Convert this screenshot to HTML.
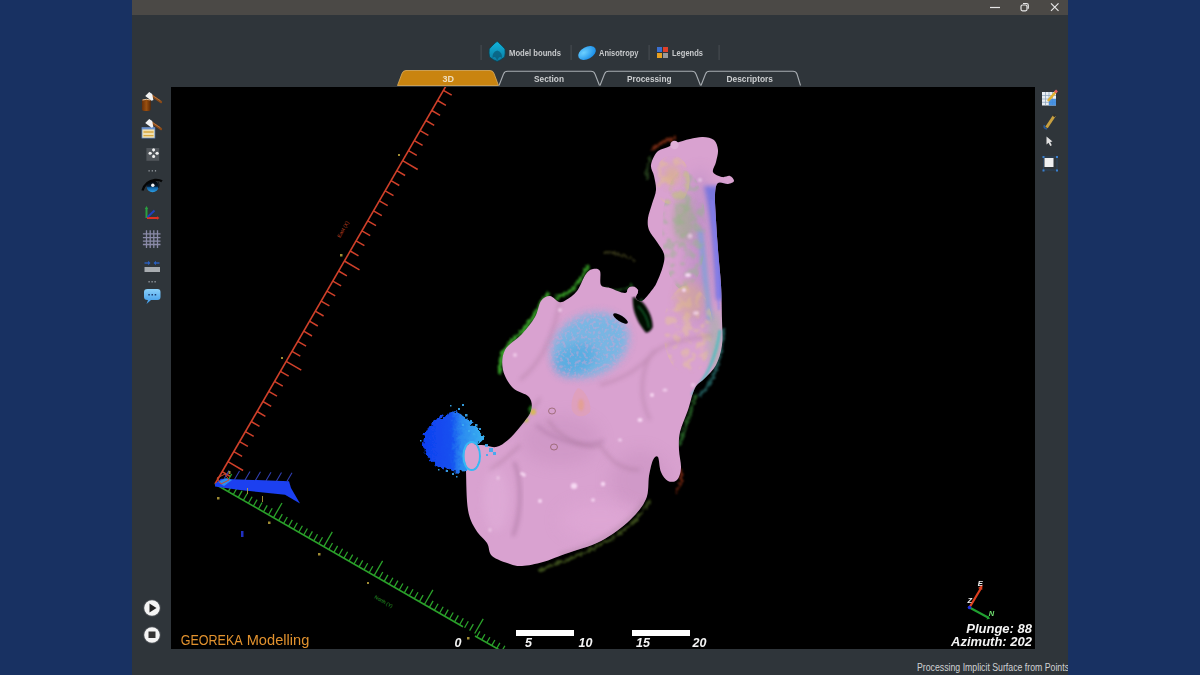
<!DOCTYPE html>
<html><head><meta charset="utf-8">
<style>
html,body{margin:0;padding:0;width:1200px;height:675px;overflow:hidden;background:#183162;font-family:"Liberation Sans",sans-serif;}
svg{position:absolute;left:0;top:0;}
text{font-family:"Liberation Sans",sans-serif;}
</style></head>
<body>
<svg width="1200" height="675" viewBox="0 0 1200 675">
<defs>
  <clipPath id="vc"><rect x="171" y="87" width="864" height="562"/></clipPath>
  <filter id="sb" x="-20%" y="-50%" width="140%" height="200%"><feGaussianBlur stdDeviation="0.7"/></filter>
  <clipPath id="wc"><rect x="132" y="0" width="936" height="675"/></clipPath>
  <radialGradient id="ellb" cx="0.35" cy="0.35" r="0.7"><stop offset="0" stop-color="#6cd0ff"/><stop offset="1" stop-color="#1a8ee8"/></radialGradient>
  <linearGradient id="hexg" x1="0" y1="0" x2="0" y2="1"><stop offset="0" stop-color="#12b4dc"/><stop offset="1" stop-color="#0a7aa0"/></linearGradient>
</defs>
<!-- window -->
<rect x="132" y="0" width="936" height="675" fill="#2f353a"/>
<rect x="132" y="0" width="936" height="15" fill="#4b4946"/>
<g stroke="#e6e6e6" stroke-width="1.2" fill="none">
  <line x1="990" y1="7.5" x2="1000" y2="7.5"/>
  <rect x="1021" y="5" width="6" height="5.8" rx="1.5"/>
  <path d="M1023 3.5 h3.5 a1.8 1.8 0 0 1 1.8 1.8 v3.5"/>
  <path d="M1051 3.3 l7.5 7.5 M1058.5 3.3 l-7.5 7.5"/>
</g>
<!-- top toolbar -->
<g fill="#454a4f">
  <rect x="480.5" y="45" width="1.2" height="15"/>
  <rect x="570.5" y="45" width="1.2" height="15"/>
  <rect x="648.5" y="45" width="1.2" height="15"/>
  <rect x="718.5" y="45" width="1.2" height="15"/>
</g>
<!-- model bounds icon -->
<path d="M497.2 41.5 Q499 42.5 505 49 Q505.5 53 504.7 57 Q500 60.5 497.2 61.5 Q494 60.5 489.5 57 Q488.7 53 489.2 49 Q495 42.5 497.2 41.5Z" fill="url(#hexg)" stroke="#0a4050" stroke-width="0.8"/>
<path d="M492.5 58 Q492 52 497.2 50.5 Q502.5 52 502 58 Q499 55 497.2 61 Q495.5 55 492.5 58Z" fill="#0a5a78" opacity="0.75"/>
<!-- anisotropy icon -->
<ellipse cx="587" cy="53" rx="9.5" ry="6" transform="rotate(-28 587 53)" fill="url(#ellb)"/>
<!-- legends icon -->
<rect x="657" y="47" width="5" height="5" fill="#3a6fd0"/>
<rect x="663" y="47" width="5" height="5" fill="#e0402a"/>
<rect x="657" y="53" width="5" height="5" fill="#e8a020"/>
<rect x="663" y="53" width="5" height="5" fill="#9a9a9a"/>
<g fill="#d4d6d8" font-size="9.2" style="font-weight:bold" opacity="0.92">
  <text x="509" y="56.3" textLength="52" lengthAdjust="spacingAndGlyphs">Model bounds</text>
  <text x="599" y="56.3" textLength="39.5" lengthAdjust="spacingAndGlyphs">Anisotropy</text>
  <text x="672" y="56.3" textLength="31" lengthAdjust="spacingAndGlyphs">Legends</text>
</g>
<!-- tabs -->
<path d="M397.5 85.5 L402 73.5 Q403 70.5 406 70.5 L490 70.5 Q493 70.5 494 73.5 L498.5 85.5 Z" fill="#c98410" stroke="#e0b060" stroke-width="0.8"/>
<g fill="none" stroke="#a8adb2" stroke-width="1.1">
  <path d="M499 85.5 L503.5 74 Q504.5 71.2 507.5 71.2 L591 71.2 Q594 71.2 595 74 L599.5 85.5"/>
  <path d="M600 85.5 L604.5 74 Q605.5 71.2 608.5 71.2 L692 71.2 Q695 71.2 696 74 L700.5 85.5"/>
  <path d="M701 85.5 L705.5 74 Q706.5 71.2 709.5 71.2 L793 71.2 Q796 71.2 797 74 L800.5 85.5"/>
</g>
<g font-size="9.4" fill="#d8dadc" style="font-weight:bold" opacity="0.93">
  <text x="442.5" y="82" fill="#f3e6cc" textLength="11.5" lengthAdjust="spacingAndGlyphs">3D</text>
  <text x="534" y="82" textLength="30" lengthAdjust="spacingAndGlyphs">Section</text>
  <text x="627" y="82" textLength="44.5" lengthAdjust="spacingAndGlyphs">Processing</text>
  <text x="726.5" y="82" textLength="46.5" lengthAdjust="spacingAndGlyphs">Descriptors</text>
</g>

<!-- left toolbar -->
<g>
  <!-- icon1 log + axe -->
  <defs><linearGradient id="logg" x1="0" y1="0" x2="1" y2="0"><stop offset="0" stop-color="#6a3008"/><stop offset="0.5" stop-color="#9a5010"/><stop offset="1" stop-color="#5a2806"/></linearGradient></defs>
  <path d="M142 100 Q142 99 146.4 99 Q150.8 99 150.8 100 L150.8 109.5 Q150.8 111 146.4 111 Q142 111 142 109.5Z" fill="url(#logg)"/>
  <path d="M142.5 100 Q146.4 98.6 150.3 100" stroke="#e8d0b0" stroke-width="0.9" fill="none"/>
  <path d="M152 95.8 L161 102" stroke="#8a4a18" stroke-width="2.3" stroke-linecap="round"/>
  <path d="M152.5 95.5 L160 100.5" stroke="#c07a40" stroke-width="0.8" stroke-linecap="round"/>
  <path d="M145.2 96 L149.2 92 L152.2 94 L153.4 100 L151.6 100.8 L147.6 97.8Z" fill="#f2f2f2"/>
  <!-- icon2 window + axe -->
  <rect x="141.6" y="127.2" width="13.6" height="11.2" fill="#6a92d0"/>
  <rect x="142.4" y="129.4" width="12" height="8.3" fill="#f0e0b0"/>
  <path d="M143.5 132 H153.5 M143.5 135.6 H153.5" stroke="#d8a840" stroke-width="1.4"/>
  <path d="M152 122.8 L161 129" stroke="#8a4a18" stroke-width="2.3" stroke-linecap="round"/>
  <path d="M152.5 122.5 L160 127.5" stroke="#c07a40" stroke-width="0.8" stroke-linecap="round"/>
  <path d="M145.2 123 L149.2 119 L152.2 121 L153.4 127 L151.6 127.8 L147.6 124.8Z" fill="#f2f2f2"/>
  <!-- icon3 move -->
  <rect x="146.4" y="148" width="12.8" height="12.8" fill="#50555a"/>
  <g fill="#f0f0f0">
    <circle cx="153.6" cy="149.8" r="1.5"/><circle cx="153.6" cy="156.6" r="1.5"/>
    <circle cx="150" cy="153.2" r="1.5"/><circle cx="157.2" cy="153.2" r="1.5"/>
    <path d="M152.4 150.6 h2.4 l-1.2 1.2z M152.4 155.8 h2.4 l-1.2 -1.2z M150.8 152 v2.4 l1.2 -1.2z M156.4 152 v2.4 l-1.2 -1.2z"/>
  </g>
  <!-- dots -->
  <g fill="#8a9096"><rect x="148.5" y="170" width="1.2" height="1.6"/><rect x="151.7" y="170" width="1.2" height="1.6"/><rect x="154.9" y="170" width="1.2" height="1.6"/></g>
  <!-- eye -->
  <defs><linearGradient id="irisg" x1="0" y1="0" x2="0" y2="1"><stop offset="0" stop-color="#000"/><stop offset="0.5" stop-color="#08182a"/><stop offset="0.62" stop-color="#1060a0"/><stop offset="1" stop-color="#2a9ee6"/></linearGradient></defs>
  <circle cx="152.6" cy="186.2" r="6" fill="url(#irisg)"/>
  <path d="M142.5 190.5 Q145.5 181 155 179.9 Q159.5 179.6 162 181.3" stroke="#050505" stroke-width="2.3" fill="none"/>
  <path d="M158 181.5 Q160 185 158.5 188" stroke="#050505" stroke-width="1" fill="none" opacity="0.6"/>
  <circle cx="152.8" cy="185.2" r="1.7" fill="#f4f4f4"/>
  <!-- axes -->
  <path d="M146.5 218 V208" stroke="#2aa040" stroke-width="2"/>
  <path d="M144.8 209 l1.7 -3 l1.7 3z" fill="#2aa040"/>
  <path d="M147 218 H157.5" stroke="#e03020" stroke-width="2"/>
  <path d="M157 216.3 l2.5 1.7 l-2.5 1.7z" fill="#e03020"/>
  <path d="M147.5 217 L154.5 210.5" stroke="#2040c0" stroke-width="2"/>
  <!-- grid -->
  <g stroke="#8a8aa8" stroke-width="1.3">
    <path d="M146.5 230.3 V247.9 M150.2 230.3 V247.9 M153.8 230.3 V247.9 M157.5 230.3 V247.9"/>
    <path d="M142.9 233.9 H160.5 M142.9 237.6 H160.5 M142.9 241.2 H160.5 M142.9 244.5 H160.5"/>
  </g>
  <!-- arrows + bar -->
  <g fill="#2a60c0">
    <rect x="144.5" y="262.3" width="5" height="1.4"/><rect x="154.5" y="262.3" width="5" height="1.4"/>
    <path d="M148 260.8 l2.5 2.2 l-2.5 2.2z"/><path d="M156 260.8 l-2.5 2.2 l2.5 2.2z"/>
  </g>
  <rect x="144.5" y="267" width="15.5" height="5" fill="#a8acb0"/>
  <g fill="#9aa0a6"><rect x="148.5" y="281" width="1.2" height="1.5"/><rect x="151.5" y="281" width="1.2" height="1.5"/><rect x="154.5" y="281" width="1.2" height="1.5"/></g>
  <!-- speech bubble -->
  <defs><linearGradient id="bubg" x1="0" y1="0" x2="0" y2="1"><stop offset="0" stop-color="#8ad0fa"/><stop offset="1" stop-color="#3a98e8"/></linearGradient></defs>
  <path d="M147.5 289 H157.5 Q160.5 289 160.5 292 V297 Q160.5 300 157.5 300 H151 L146.5 304 L148 300 H147.5 Q144 300 144 297 V292 Q144 289 147.5 289Z" fill="url(#bubg)"/>
  <g fill="#1a3a70"><rect x="148.3" y="294" width="1.5" height="1.5"/><rect x="151.5" y="294" width="1.5" height="1.5"/><rect x="154.7" y="294" width="1.5" height="1.5"/></g>
  <!-- play / stop -->
  <circle cx="152" cy="608" r="8.8" fill="#5a5e62" opacity="0.6"/>
  <circle cx="152" cy="608" r="7.8" fill="#f4f4f4"/>
  <path d="M149.5 603.5 L156.5 608 L149.5 612.5Z" fill="#222"/>
  <circle cx="152" cy="635" r="8.8" fill="#5a5e62" opacity="0.6"/>
  <circle cx="152" cy="635" r="7.8" fill="#f4f4f4"/>
  <rect x="148.5" y="631.5" width="7" height="6.5" fill="#333"/>
</g>
<!-- right toolbar -->
<g>
  <rect x="1042" y="92" width="14" height="13.5" fill="#e8eef4"/>
  <g stroke="#8aa0b8" stroke-width="0.7"><path d="M1042 95.5 H1056 M1042 99 H1056 M1042 102.3 H1056 M1045.5 92 V105.5 M1049 92 V105.5 M1052.5 92 V105.5"/></g>
  <rect x="1049" y="99" width="7" height="6.5" fill="#3a8ae0" opacity="0.9"/>
  <path d="M1048 101 L1056 91.5" stroke="#e0b030" stroke-width="2.6"/>
  <path d="M1055 92.5 L1057 90.5" stroke="#e06060" stroke-width="2.6"/>
  <path d="M1044.5 125 Q1043 128 1047 129" stroke="#2a5a9a" stroke-width="1.6" fill="none"/>
  <path d="M1046.5 127.5 L1054.5 115.5" stroke="#c8a040" stroke-width="3"/>
  <path d="M1053.5 116.5 L1055 114.2" stroke="#303030" stroke-width="3"/>
  <path d="M1046.5 136.5 L1046.5 144.5 L1048.5 142.8 L1050.3 146 L1051.8 145.2 L1050.2 142 L1052.5 141.6 Z" fill="#e0e0e0"/>
  <rect x="1043.5" y="157" width="13.5" height="13" fill="none" stroke="#2a5a90" stroke-width="0.6" opacity="0.7"/>
  <rect x="1044.5" y="158" width="9" height="9" fill="#f0f0f0"/>
  <g fill="#3a80d0"><rect x="1042.5" y="156" width="2" height="2"/><rect x="1056" y="156" width="2" height="2"/><rect x="1042.5" y="169.5" width="2" height="2"/><rect x="1056" y="169.5" width="2" height="2"/></g>
</g>
<!-- viewport -->
<rect x="171" y="87" width="864" height="562" fill="#000"/>
<g clip-path="url(#vc)">
<path d="M215 484 L445.9 86.1" stroke="#d0402a" stroke-width="1.6"/><path d="M216.3 481.8l8.3 4.8M222.1 471.7l8.3 4.8M228 461.7l15.1 8.8M233.8 451.6l8.3 4.8M239.6 441.6l8.3 4.8M245.4 431.6l8.3 4.8M251.2 421.5l8.3 4.8M257.1 411.5l8.3 4.8M262.9 401.5l8.3 4.8M268.7 391.4l8.3 4.8M274.5 381.4l8.3 4.8M280.4 371.4l8.3 4.8M286.2 361.3l15.1 8.8M292 351.3l8.3 4.8M297.8 341.3l8.3 4.8M303.7 331.2l8.3 4.8M309.5 321.2l8.3 4.8M315.3 311.2l8.3 4.8M321.1 301.1l8.3 4.8M326.9 291.1l8.3 4.8M332.8 281.1l8.3 4.8M338.6 271l8.3 4.8M344.4 261l15.1 8.8M350.2 251l8.3 4.8M356.1 240.9l8.3 4.8M361.9 230.9l8.3 4.8M367.7 220.9l8.3 4.8M373.5 210.8l8.3 4.8M379.4 200.8l8.3 4.8M385.2 190.8l8.3 4.8M391 180.7l8.3 4.8M396.8 170.7l8.3 4.8M402.6 160.7l15.1 8.8M408.5 150.6l8.3 4.8M414.3 140.6l8.3 4.8M420.1 130.6l8.3 4.8M425.9 120.5l8.3 4.8M431.8 110.5l8.3 4.8M437.6 100.5l8.3 4.8M443.4 90.4l8.3 4.8" stroke="#d0402a" stroke-width="1.5"/><path d="M215 484 L463 626.7" stroke="#2aa02a" stroke-width="1.6"/><path d="M475 636 L512 657" stroke="#2aa02a" stroke-width="1.6"/><path d="M218.2 485.8l3.7 -6.5M223.2 488.7l8.5 -14.7M228.3 491.6l3.7 -6.5M233.3 494.5l3.7 -6.5M238.3 497.4l3.7 -6.5M243.4 500.3l3.7 -6.5M248.4 503.2l3.7 -6.5M253.4 506.1l3.7 -6.5M258.4 509l3.7 -6.5M263.5 511.9l3.7 -6.5M268.5 514.8l3.7 -6.5M273.5 517.7l8.5 -14.7M278.6 520.6l3.7 -6.5M283.6 523.5l3.7 -6.5M288.6 526.4l3.7 -6.5M293.6 529.3l3.7 -6.5M298.7 532.2l3.7 -6.5M303.7 535l3.7 -6.5M308.7 537.9l3.7 -6.5M313.8 540.8l3.7 -6.5M318.8 543.7l3.7 -6.5M323.8 546.6l8.5 -14.7M328.8 549.5l3.7 -6.5M333.9 552.4l3.7 -6.5M338.9 555.3l3.7 -6.5M343.9 558.2l3.7 -6.5M349 561.1l3.7 -6.5M354 564l3.7 -6.5M359 566.9l3.7 -6.5M364 569.8l3.7 -6.5M369.1 572.7l3.7 -6.5M374.1 575.6l8.5 -14.7M379.1 578.5l3.7 -6.5M384.2 581.4l3.7 -6.5M389.2 584.2l3.7 -6.5M394.2 587.1l3.7 -6.5M399.2 590l3.7 -6.5M404.3 592.9l3.7 -6.5M409.3 595.8l3.7 -6.5M414.3 598.7l3.7 -6.5M419.4 601.6l3.7 -6.5M424.4 604.5l8.5 -14.7M429.4 607.4l3.7 -6.5M434.4 610.3l3.7 -6.5M439.5 613.2l3.7 -6.5M444.5 616.1l3.7 -6.5M449.5 619l3.7 -6.5M454.6 621.9l3.7 -6.5M459.6 624.8l3.7 -6.5M464.6 627.7l3.7 -6.5M469.6 630.6l3.7 -6.5M474.7 633.5l8.5 -14.7M476.7 637l3.2 -5.6M481.7 639.9l3.2 -5.6M486.7 642.8l3.2 -5.6M491.7 645.6l3.2 -5.6M496.7 648.5l3.2 -5.6M501.7 651.4l3.2 -5.6" stroke="#2aa02a" stroke-width="1.3"/>
<!-- blue wedge -->
<path d="M215 484 L221 478.7 L289 481.3 L291 488 L300 503.6 L285 494.7 L240 490 L215 486.5Z" fill="#1a40f0" filter="url(#sb)"/>
<path d="M218 482 L226 478 L232 480 L224 486Z" fill="#30a0f0" opacity="0.8"/>
<g stroke="#3a4ad0" stroke-width="1.1" opacity="0.85">
<path d="M224 479 l5 -8.5 M234.5 479.5 l5 -8.5 M245 480 l5 -8.5 M255.5 480.3 l5 -8.5 M266 480.7 l5 -8.5 M276.5 481 l5 -8.5 M287 481.3 l5 -8.5"/>
</g>
<path d="M217 478 L225 474 L229 480 L221 484Z" fill="none" stroke="#d04a2a" stroke-width="1"/>
<g fill="#c8b040" opacity="0.8">
<rect x="228.5" y="471" width="2" height="3"/><rect x="217" y="497" width="2.5" height="2.5"/><rect x="268" y="521.5" width="2.5" height="2.5"/>
<rect x="318" y="553" width="2.5" height="2.5"/><rect x="367" y="582" width="2" height="2"/><rect x="262" y="496" width="1" height="6"/><rect x="247" y="488" width="1" height="6"/>
<rect x="340" y="254" width="2.5" height="2.5"/><rect x="398" y="154" width="2" height="2"/><rect x="281" y="357" width="2" height="2"/><rect x="467" y="637" width="2.5" height="2.5"/>
</g>
<rect x="241" y="531" width="2.5" height="6" fill="#2030c0"/>
<text x="0" y="0" font-size="5" fill="#2aa02a" transform="translate(374 598) rotate(30)">North (Y)</text>
<text x="0" y="0" font-size="5" fill="#c04020" transform="translate(340 238) rotate(-60)">East (X)</text>

<defs>
  <clipPath id="bc"><path d="M651 165 C651.5 161 654.2 155 657 152 C659.8 149 664.8 148.5 668 147 C671.2 145.5 672.3 144.3 676 143 C679.7 141.7 685.5 140 690 139 C694.5 138 699 136.8 703 137 C707 137.2 711.5 137.8 714 140 C716.5 142.2 717.7 146.3 718 150 C718.3 153.7 716.8 158.3 716 162 C715.2 165.7 712 169.5 713 172 C714 174.5 719.2 176.3 722 177 C724.8 177.7 728 175.3 730 176 C732 176.7 734.3 179.7 734 181 C733.7 182.3 730.7 183.7 728 184 C725.3 184.3 720.2 181.2 718 183 C715.8 184.8 715.3 188.8 715 195 C714.7 201.2 715.5 210.8 716 220 C716.5 229.2 717.2 239.2 718 250 C718.8 260.8 720.3 273.3 721 285 C721.7 296.7 721.8 310 722 320 C722.2 330 723 337.5 722 345 C721 352.5 718.8 359.5 716 365 C713.2 370.5 708.5 374.2 705 378 C701.5 381.8 697.8 382.7 695 388 C692.2 393.3 690.5 402.7 688 410 C685.5 417.3 681.5 425.3 680 432 C678.5 438.7 678.8 444 679 450 C679.2 456 681.3 463 681 468 C680.7 473 679.2 477.8 677 480 C674.8 482.2 670.7 482.3 668 481 C665.3 479.7 662.7 476 661 472 C659.3 468 659.3 459 658 457 C656.7 455 654.5 456.8 653 460 C651.5 463.2 650.2 469.5 649 476 C647.8 482.5 649.2 491.7 646 499 C642.8 506.3 637.5 513 630 520 C622.5 527 611.8 535.3 601 541 C590.2 546.7 574.7 550.5 565 554 C555.3 557.5 550.2 560 543 562 C535.8 564 527.5 565.7 522 566 C516.5 566.3 515 565.7 510 564 C505 562.3 495.8 559.5 492 556 C488.2 552.5 489.7 547.3 487 543 C484.3 538.7 479.2 535.5 476 530 C472.8 524.5 469.7 520 468 510 C466.3 500 466.3 480.3 466 470 C465.7 459.7 463.5 452.2 466 448 C468.5 443.8 476 445.2 481 445 C486 444.8 491.5 447.8 496 447 C500.5 446.2 504 443.3 508 440 C512 436.7 516.2 431.8 520 427 C523.8 422.2 529.5 416 531 411 C532.5 406 532 400.8 529 397 C526 393.2 517.3 392.5 513 388 C508.7 383.5 504.3 376.3 503 370 C501.7 363.7 501.8 356 505 350 C508.2 344 517 339.5 522 334 C527 328.5 531.8 322.5 535 317 C538.2 311.5 538.5 304.5 541 301 C543.5 297.5 547 295.8 550 296 C553 296.2 556.3 301.3 559 302 C561.7 302.7 563 301.8 566 300 C569 298.2 573.7 295.3 577 291 C580.3 286.7 583.3 277.7 586 274 C588.7 270.3 590.7 269.5 593 269 C595.3 268.5 598.7 268.3 600 271 C601.3 273.7 599.3 282.2 601 285 C602.7 287.8 606 286.7 610 288 C614 289.3 621.7 293.2 625 293 C628.3 292.8 627.8 287.5 630 287 C632.2 286.5 637 288.2 638 290 C639 291.8 635.3 296.2 636 298 C636.7 299.8 639.3 302.3 642 301 C644.7 299.7 649.5 293.2 652 290 C654.5 286.8 655.2 286 657 282 C658.8 278 661.8 270.7 663 266 C664.2 261.3 665 258 664 254 C663 250 659.5 246 657 242 C654.5 238 650.5 234 649 230 C647.5 226 647.5 222.3 648 218 C648.5 213.7 650.7 208.7 652 204 C653.3 199.3 655.7 194.7 656 190 C656.3 185.3 654.8 180.2 654 176 C653.2 171.8 650.5 169 651 165Z"/></clipPath>
  <filter id="bl1" x="-50%" y="-50%" width="200%" height="200%"><feGaussianBlur stdDeviation="1"/></filter>
  <filter id="bl2" x="-50%" y="-50%" width="200%" height="200%"><feGaussianBlur stdDeviation="2"/></filter>
  <filter id="bl4" x="-50%" y="-50%" width="200%" height="200%"><feGaussianBlur stdDeviation="4"/></filter>
  <filter id="bl8" x="-50%" y="-50%" width="200%" height="200%"><feGaussianBlur stdDeviation="8"/></filter>
  <filter id="mottle2" x="0" y="0" width="100%" height="100%">
    <feTurbulence type="fractalNoise" baseFrequency="0.35" numOctaves="2" seed="7" result="n"/>
    <feColorMatrix in="n" type="matrix" values="0 0 0 0 0  0 0 0 0 0  0 0 0 0 0  0 0 0 12 -6.5" result="a"/>
    <feComposite in="SourceGraphic" in2="a" operator="in" result="c"/>
    <feComposite in="c" in2="SourceAlpha" operator="in"/>
  </filter>
  <filter id="rag" x="-20%" y="-20%" width="140%" height="140%">
    <feTurbulence type="fractalNoise" baseFrequency="0.25" numOctaves="2" seed="5" result="n"/>
    <feDisplacementMap in="SourceGraphic" in2="n" scale="7" xChannelSelector="R" yChannelSelector="G"/>
    <feGaussianBlur stdDeviation="0.5"/>
  </filter>
  <filter id="ragb" x="-20%" y="-20%" width="140%" height="140%">
    <feTurbulence type="fractalNoise" baseFrequency="0.3" numOctaves="2" seed="9" result="n"/>
    <feDisplacementMap in="SourceGraphic" in2="n" scale="6" xChannelSelector="R" yChannelSelector="G"/>
    <feGaussianBlur stdDeviation="1.1"/>
  </filter>
  <filter id="mottle3" x="0" y="0" width="100%" height="100%">
    <feTurbulence type="fractalNoise" baseFrequency="0.12" numOctaves="2" seed="11" result="n"/>
    <feColorMatrix in="n" type="matrix" values="0 0 0 0 0  0 0 0 0 0  0 0 0 0 0  0 0 0 8 -4" result="a"/>
    <feGaussianBlur in="a" stdDeviation="0.8" result="ab"/>
    <feComposite in="SourceGraphic" in2="ab" operator="in" result="c"/>
    <feComposite in="c" in2="SourceAlpha" operator="in"/>
  </filter>
  <filter id="mottle" x="0" y="0" width="100%" height="100%">
    <feTurbulence type="fractalNoise" baseFrequency="0.18" numOctaves="2" seed="3" result="n"/>
    <feColorMatrix in="n" type="matrix" values="0 0 0 0 0  0 0 0 0 0  0 0 0 0 0  0 0 0 9 -4" result="a"/>
    <feComposite in="SourceGraphic" in2="a" operator="in"/>
  </filter>
</defs>
<!-- halo scatter -->
<g fill="none" stroke-linecap="round" filter="url(#ragb)" opacity="0.9">
  <path d="M500 372 C498 355 510 340 522 332 C532 322 538 305 548 294" stroke="#3aaa2a" stroke-width="4" opacity="1"/>
  <path d="M556 298 C570 294 578 286 588 266" stroke="#3aaa2a" stroke-width="3.5" opacity="0.9"/>
  <path d="M604 252 C612 252 625 255 634 260" stroke="#6a6a30" stroke-width="2" opacity="0.6"/>
  <path d="M598 286 C605 292 620 292 632 286" stroke="#2a7a2a" stroke-width="2.5" opacity="0.7"/>
  <path d="M641 300 C650 315 655 325 656 340" stroke="#1a6a30" stroke-width="3" opacity="0.8"/>
  <path d="M652 150 C655 145 665 140 675 138" stroke="#b04020" stroke-width="3" opacity="0.7"/>
  <path d="M650 158 C647 165 646 172 647 180" stroke="#406a30" stroke-width="2.5" opacity="0.6"/>
  <path d="M723 330 C722 360 712 385 700 395" stroke="#3aa0a0" stroke-width="3" opacity="0.6"/>
  <path d="M696 395 C690 415 684 430 680 445" stroke="#40a040" stroke-width="3" opacity="0.6"/>
  <path d="M681 470 C683 480 680 488 676 492" stroke="#c04020" stroke-width="2.5" opacity="0.7"/>
  <path d="M650 500 C640 520 620 535 600 545 C580 556 560 562 540 570" stroke="#6a8a30" stroke-width="2.5" opacity="0.6"/>
  <path d="M480 440 C470 442 466 445 464 450" stroke="#2a8a22" stroke-width="2.5" opacity="0.5"/>
  <path d="M531 408 C533 415 530 422 524 428" stroke="#2a9a22" stroke-width="4" opacity="0.8"/>
</g>
<path d="M651 165 C651.5 161 654.2 155 657 152 C659.8 149 664.8 148.5 668 147 C671.2 145.5 672.3 144.3 676 143 C679.7 141.7 685.5 140 690 139 C694.5 138 699 136.8 703 137 C707 137.2 711.5 137.8 714 140 C716.5 142.2 717.7 146.3 718 150 C718.3 153.7 716.8 158.3 716 162 C715.2 165.7 712 169.5 713 172 C714 174.5 719.2 176.3 722 177 C724.8 177.7 728 175.3 730 176 C732 176.7 734.3 179.7 734 181 C733.7 182.3 730.7 183.7 728 184 C725.3 184.3 720.2 181.2 718 183 C715.8 184.8 715.3 188.8 715 195 C714.7 201.2 715.5 210.8 716 220 C716.5 229.2 717.2 239.2 718 250 C718.8 260.8 720.3 273.3 721 285 C721.7 296.7 721.8 310 722 320 C722.2 330 723 337.5 722 345 C721 352.5 718.8 359.5 716 365 C713.2 370.5 708.5 374.2 705 378 C701.5 381.8 697.8 382.7 695 388 C692.2 393.3 690.5 402.7 688 410 C685.5 417.3 681.5 425.3 680 432 C678.5 438.7 678.8 444 679 450 C679.2 456 681.3 463 681 468 C680.7 473 679.2 477.8 677 480 C674.8 482.2 670.7 482.3 668 481 C665.3 479.7 662.7 476 661 472 C659.3 468 659.3 459 658 457 C656.7 455 654.5 456.8 653 460 C651.5 463.2 650.2 469.5 649 476 C647.8 482.5 649.2 491.7 646 499 C642.8 506.3 637.5 513 630 520 C622.5 527 611.8 535.3 601 541 C590.2 546.7 574.7 550.5 565 554 C555.3 557.5 550.2 560 543 562 C535.8 564 527.5 565.7 522 566 C516.5 566.3 515 565.7 510 564 C505 562.3 495.8 559.5 492 556 C488.2 552.5 489.7 547.3 487 543 C484.3 538.7 479.2 535.5 476 530 C472.8 524.5 469.7 520 468 510 C466.3 500 466.3 480.3 466 470 C465.7 459.7 463.5 452.2 466 448 C468.5 443.8 476 445.2 481 445 C486 444.8 491.5 447.8 496 447 C500.5 446.2 504 443.3 508 440 C512 436.7 516.2 431.8 520 427 C523.8 422.2 529.5 416 531 411 C532.5 406 532 400.8 529 397 C526 393.2 517.3 392.5 513 388 C508.7 383.5 504.3 376.3 503 370 C501.7 363.7 501.8 356 505 350 C508.2 344 517 339.5 522 334 C527 328.5 531.8 322.5 535 317 C538.2 311.5 538.5 304.5 541 301 C543.5 297.5 547 295.8 550 296 C553 296.2 556.3 301.3 559 302 C561.7 302.7 563 301.8 566 300 C569 298.2 573.7 295.3 577 291 C580.3 286.7 583.3 277.7 586 274 C588.7 270.3 590.7 269.5 593 269 C595.3 268.5 598.7 268.3 600 271 C601.3 273.7 599.3 282.2 601 285 C602.7 287.8 606 286.7 610 288 C614 289.3 621.7 293.2 625 293 C628.3 292.8 627.8 287.5 630 287 C632.2 286.5 637 288.2 638 290 C639 291.8 635.3 296.2 636 298 C636.7 299.8 639.3 302.3 642 301 C644.7 299.7 649.5 293.2 652 290 C654.5 286.8 655.2 286 657 282 C658.8 278 661.8 270.7 663 266 C664.2 261.3 665 258 664 254 C663 250 659.5 246 657 242 C654.5 238 650.5 234 649 230 C647.5 226 647.5 222.3 648 218 C648.5 213.7 650.7 208.7 652 204 C653.3 199.3 655.7 194.7 656 190 C656.3 185.3 654.8 180.2 654 176 C653.2 171.8 650.5 169 651 165Z" fill="#d9a2d0"/>
<g clip-path="url(#bc)">
  <!-- broad shading -->
  <ellipse cx="700" cy="250" rx="14" ry="80" fill="#a880c0" opacity="0.45" filter="url(#bl8)"/>
  <ellipse cx="560" cy="440" rx="40" ry="25" fill="#b880b0" opacity="0.25" filter="url(#bl8)"/>
  <ellipse cx="640" cy="480" rx="30" ry="30" fill="#b880b0" opacity="0.25" filter="url(#bl8)"/>
  <ellipse cx="600" cy="520" rx="40" ry="18" fill="#e2aad8" opacity="0.5" filter="url(#bl8)"/>
  <!-- cyan patch on left lobe -->
  <ellipse cx="590" cy="345" rx="40" ry="30" transform="rotate(-25 590 345)" fill="#60bce8" opacity="0.8" filter="url(#bl4)"/>
  <ellipse cx="575" cy="360" rx="22" ry="14" transform="rotate(-25 575 360)" fill="#48a8e0" opacity="0.6" filter="url(#bl4)"/>
  <ellipse cx="590" cy="345" rx="48" ry="38" transform="rotate(-25 590 345)" fill="#d9a2d0" filter="url(#mottle2)" opacity="0.45"/>
  <!-- blue band right of column -->
  <path d="M704 186 C712 220 714 260 716 300 L726 300 L726 186Z" fill="#6a70e0" opacity="0.85" filter="url(#bl2)"/>
  <path d="M700 230 C704 260 706 290 710 320" stroke="#5aa8e0" stroke-width="4" fill="none" opacity="0.7" filter="url(#bl2)"/>
  <path d="M712 200 C716 240 718 280 719 310" stroke="#8a80f0" stroke-width="2" fill="none" opacity="0.8" filter="url(#bl1)"/>
  <!-- green/yellow patches on column -->
  <ellipse cx="684" cy="230" rx="22" ry="60" fill="#90b888" filter="url(#mottle3)" opacity="0.45"/>
  <ellipse cx="688" cy="330" rx="25" ry="45" fill="#e8c890" filter="url(#mottle3)" opacity="0.45"/>
  <ellipse cx="672" cy="180" rx="18" ry="25" fill="#e8c880" filter="url(#mottle3)" opacity="0.4"/>
  <ellipse cx="684" cy="220" rx="10" ry="22" fill="#8fb07a" opacity="0.55" filter="url(#bl4)"/>
  <ellipse cx="672" cy="175" rx="8" ry="10" fill="#d8b870" opacity="0.55" filter="url(#bl4)"/>
  <ellipse cx="690" cy="300" rx="14" ry="18" fill="#d8b080" opacity="0.45" filter="url(#bl4)"/>
  <ellipse cx="715" cy="340" rx="6" ry="30" fill="#80c090" opacity="0.45" filter="url(#bl4)"/>
  <!-- right edge cyan -->
  <path d="M720 330 C716 360 705 380 692 395" stroke="#40c0c0" stroke-width="3" fill="none" opacity="0.7" filter="url(#bl1)"/>
  <!-- contour shading lines -->
  <g fill="none" stroke="#a07090" stroke-width="2.5" opacity="0.4" filter="url(#bl2)">
    <path d="M505 440 C520 420 535 410 540 398"/>
    <path d="M490 470 C505 460 515 450 520 445"/>
    <path d="M548 420 C560 440 590 450 600 445 C610 460 620 470 640 470"/>
    <path d="M650 420 C640 400 640 380 648 360 C660 340 690 340 712 335"/>
    <path d="M600 385 C620 380 640 370 655 350"/>
    <path d="M560 300 C555 330 545 360 520 380"/>
  </g>
  <path d="M514 462 C522 480 522 512 513 536" stroke="#9a6890" stroke-width="3.5" fill="none" opacity="0.45" filter="url(#bl2)"/>
  <ellipse cx="496" cy="500" rx="13" ry="32" fill="#e6b8e0" opacity="0.35" filter="url(#bl4)"/>
  <path d="M536 425 C560 445 590 448 604 440" stroke="#9a6890" stroke-width="3" fill="none" opacity="0.35" filter="url(#bl2)"/>
  <path d="M560 555 C600 545 630 525 645 500" stroke="#9a7890" stroke-width="4" fill="none" opacity="0.35" filter="url(#bl2)"/>
  <!-- cone -->
  <path d="M578 388 C586 390 592 405 590 412 C585 418 575 418 572 410 C570 402 574 392 578 388Z" fill="#e0a0b8" opacity="0.8"/>
  <ellipse cx="581" cy="405" rx="3" ry="6" fill="#e8a070" opacity="0.5" filter="url(#bl1)"/>
  <!-- crevice -->
  <path d="M632.7 296.7 C637 298 641 300 645 305 C650 312 653 320 652.7 327.3 C651 331 648 333 646 332.7 C642 328 638 322 636.7 318 C634 312 632.5 306 632.7 296.7Z" fill="#040a06" filter="url(#bl1)"/>
  <path d="M638 306 C644 312 648 320 649 328" stroke="#1a7a3a" stroke-width="2" fill="none" opacity="0.6" filter="url(#bl1)"/>
  <!-- hole -->
  <ellipse cx="620.5" cy="318.5" rx="8.5" ry="3" transform="rotate(32 620.5 318.5)" fill="#000"/>
  <!-- yellow bits -->
  <ellipse cx="533" cy="412" rx="3" ry="3" fill="#d8c040" opacity="0.8" filter="url(#bl1)"/>
  <ellipse cx="526" cy="420" rx="2.5" ry="2.5" fill="#c0c050" opacity="0.8" filter="url(#bl1)"/>
  <!-- dark spots -->
  <ellipse cx="552" cy="411" rx="3.5" ry="3" fill="none" stroke="#8a5a5a" stroke-width="1" opacity="0.7"/>
  <ellipse cx="554" cy="447" rx="3.5" ry="3" fill="none" stroke="#8a5a5a" stroke-width="1" opacity="0.7"/>
  <!-- highlights -->
  <g fill="#f6d8f2" filter="url(#bl1)">
    <ellipse cx="574" cy="486" rx="3.2" ry="3"/>
    <ellipse cx="593" cy="500" rx="1.8" ry="1.8"/>
    <ellipse cx="522" cy="473.6" rx="1.8" ry="1.5"/>
    <ellipse cx="603" cy="484" rx="2.2" ry="2.2"/>
    <ellipse cx="540" cy="501" rx="2" ry="2"/>
    <ellipse cx="524" cy="475" rx="1.8" ry="1.8"/>
    <ellipse cx="688" cy="275" rx="3" ry="2"/>
    <ellipse cx="684" cy="290" rx="2" ry="2"/>
    <ellipse cx="690" cy="236" rx="2.5" ry="2.5" opacity="0.6"/>
    <ellipse cx="640" cy="420" rx="2.5" ry="2"/>
    <ellipse cx="652" cy="395" rx="2" ry="2"/>
    <ellipse cx="693" cy="385" rx="2" ry="2" opacity="0.6"/>
    <ellipse cx="700" cy="180" rx="2" ry="2" opacity="0.6"/>
    <ellipse cx="696" cy="313" rx="3" ry="2" opacity="0.7"/>
    <ellipse cx="560" cy="310" rx="2" ry="2" opacity="0.7"/>
    <ellipse cx="515" cy="355" rx="2" ry="2" opacity="0.7"/>
    <ellipse cx="620" cy="440" rx="2" ry="1.5" opacity="0.8"/>
    <ellipse cx="665" cy="390" rx="2.5" ry="1.5" opacity="0.8"/>
    <ellipse cx="490" cy="530" rx="1.5" ry="2" opacity="0.6"/>
    <ellipse cx="498" cy="478" rx="1.5" ry="2" opacity="0.6"/>
  </g>
</g>
<!-- knob near crevice -->
<circle cx="674.5" cy="145" r="4.2" fill="#e0b0d8"/>
<ellipse cx="632.5" cy="291.5" rx="5.5" ry="5" fill="#d9a2d0"/>
<!-- blue scatter blob -->
<defs><linearGradient id="bbg" x1="0" y1="0" x2="1" y2="0"><stop offset="0" stop-color="#1040f0"/><stop offset="0.45" stop-color="#1450f0"/><stop offset="0.62" stop-color="#2a88f0"/><stop offset="1" stop-color="#3ab4f0"/></linearGradient></defs>
<g>
  <path d="M430 425 C436 418 446 414 455 411 C465 416 476 426 485 437 C483 444 476 445 468 444 C466 455 468 462 466 471 C458 473 450 471 440 467 C432 463 425 456 423 446 C423 438 426 430 430 425Z" fill="url(#bbg)" filter="url(#rag)"/>
  <ellipse cx="471.7" cy="456" rx="8.2" ry="14" fill="none" stroke="#38b8f4" stroke-width="2.2"/>
  <ellipse cx="471.7" cy="456" rx="7.2" ry="13" fill="#d9a2d0"/>
  <g fill="#3aaaf0" opacity="0.9">
    <rect x="458" y="408" width="2" height="2"/><rect x="462" y="404" width="2" height="2"/><rect x="465" y="414" width="2.5" height="2.5"/>
    <rect x="470" y="420" width="2" height="2"/><rect x="475" y="424" width="2.5" height="2.5"/><rect x="479" y="428" width="2" height="2"/>
    <rect x="468" y="430" width="2" height="2"/><rect x="473" y="433" width="2" height="2"/><rect x="462" y="424" width="2" height="2"/>
    <rect x="485" y="444" width="3" height="3"/><rect x="489" y="448" width="4" height="4"/><rect x="493" y="452" width="3" height="3"/><rect x="486" y="454" width="2" height="2"/>
    <rect x="452" y="473" width="2" height="2"/><rect x="446" y="470" width="2" height="2"/><rect x="438" y="469" width="1.5" height="1.5"/>
    <rect x="456" y="476" width="1.5" height="1.5"/><rect x="420" y="440" width="1.5" height="1.5"/><rect x="450" y="405" width="1.5" height="1.5"/>
  </g>
</g>


<!-- overlays -->
<text x="180.7" y="645" font-size="14.3" fill="#e2922e" textLength="62" lengthAdjust="spacingAndGlyphs">GEOREKA</text><text x="246.7" y="645" font-size="14.3" fill="#e2922e" textLength="62.6" lengthAdjust="spacingAndGlyphs">Modelling</text>
<g fill="#fff">
  <rect x="516" y="630" width="58" height="6"/>
  <rect x="632" y="630" width="58" height="6"/>
</g>
<g font-size="12.5" font-weight="bold" font-style="italic" fill="#f4f4f4">
  <text x="454.5" y="646.5">0</text>
  <text x="525" y="646.5">5</text>
  <text x="578.5" y="646.5">10</text>
  <text x="636" y="646.5">15</text>
  <text x="692.5" y="646.5">20</text>
</g>
<g font-size="13" font-weight="bold" font-style="italic" fill="#f4f4f4" text-anchor="end">
  <text x="1032" y="632.5">Plunge: 88</text>
  <text x="1032" y="645.5">Azimuth: 202</text>
</g>
<!-- gizmo -->
<path d="M969.5 607.5 L980.5 589" stroke="#e04020" stroke-width="2.2"/>
<path d="M978 588 l4.5 -3.5 l-0.3 5.5z" fill="#e04020"/>
<path d="M969.5 607.5 L988 617.5" stroke="#20a030" stroke-width="2"/>
<path d="M986.5 619.5 l3.5 -0.8 l-2 -3.2z" fill="#20a030"/>
<circle cx="969.5" cy="607.5" r="1.8" fill="#2030e0"/>
<g font-size="7.5" font-weight="bold" font-style="italic" fill="#f0f0f0">
  <text x="977.8" y="586">E</text>
  <text x="967.5" y="603">Z</text>
</g>
<text x="988.8" y="615.5" font-size="7.5" font-weight="bold" font-style="italic" fill="#70e070">N</text>
</g>
<!-- status -->
<g clip-path="url(#wc)">
<text x="917" y="670.5" font-size="10" fill="#d0d2d4" textLength="152" lengthAdjust="spacingAndGlyphs">Processing Implicit Surface from Points</text>
</g>
</svg>
</body></html>
